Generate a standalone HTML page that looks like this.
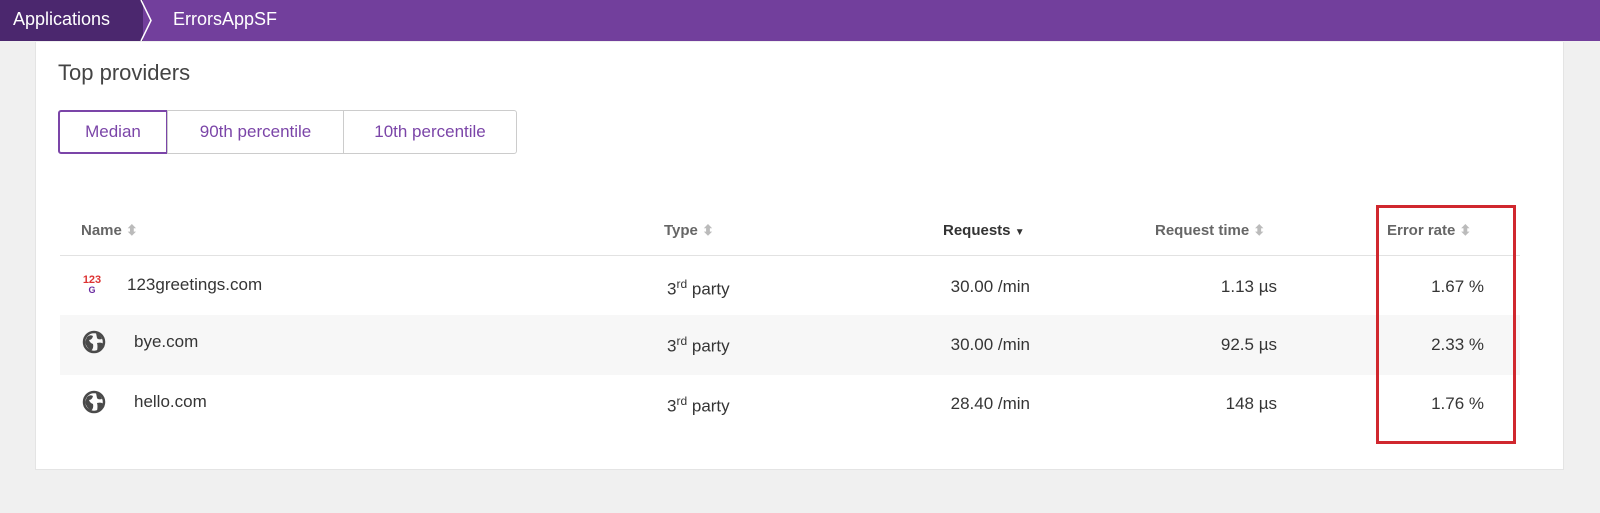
<!DOCTYPE html>
<html><head><style>
body{margin:0;width:1600px;height:513px;background:#f0f0f0;font-family:"Liberation Sans",sans-serif;position:relative;overflow:hidden}
.bar{position:absolute;left:0;top:0;width:1600px;height:41px;background:#723f9c}
.bc1{position:absolute;left:0;top:0;height:41px;width:143px;background:#4b276e}
.bar span{position:absolute;top:9px;color:#fff;font-size:18px}
.card{position:absolute;left:35px;top:42px;width:1527px;height:427px;background:#fff;border:1px solid #e4e4e4;border-top:none}
h2{position:absolute;left:58px;top:60px;margin:0;font-weight:normal;font-size:22px;color:#444}
.seg{position:absolute;top:110px;height:44px;border:1px solid #ccc;box-sizing:border-box;color:#7b45a8;font-size:17px;line-height:42px;text-align:center}
.th{position:absolute;top:222px;font-size:15px;font-weight:bold;color:#666}
.ar{color:#bbb;font-size:14px}
.c{position:absolute;font-size:17px;color:#353535}
</style></head><body>
<div class="bar"><div class="bc1"></div>
<svg style="position:absolute;left:140px;top:0" width="14" height="41"><path d="M1 0 L11 20.5 L1 41" stroke="#fff" stroke-width="1.5" fill="none"/></svg>
<span style="left:13px">Applications</span><span style="left:173px">ErrorsAppSF</span></div>
<div class="card"></div>
<h2>Top providers</h2>
<div class="seg" style="left:58px;width:110px;border:2px solid #7b45a8;border-radius:3px 0 0 3px;line-height:40px">Median</div>
<div class="seg" style="left:167px;width:177px">90th percentile</div>
<div class="seg" style="left:343px;width:174px;border-radius:0 3px 3px 0">10th percentile</div>
<div class="th" style="left:81px">Name <span class="ar">⬍</span></div>
<div class="th" style="left:664px">Type <span class="ar">⬍</span></div>
<div class="th" style="left:943px;color:#333">Requests <span style="font-size:10px">▼</span></div>
<div class="th" style="left:1155px">Request time <span class="ar">⬍</span></div>
<div class="th" style="left:1387px">Error rate <span class="ar">⬍</span></div>
<div style="position:absolute;left:60px;top:255px;width:1460px;height:1px;background:#e2e2e2"></div>
<div style="position:absolute;left:60px;top:315px;width:1460px;height:60px;background:#f7f7f7"></div>

<div style="position:absolute;left:81px;top:275px;width:22px;height:22px;font-size:11px;font-weight:bold;line-height:10px;text-align:center"><div style="color:#d33">123</div><div style="color:#6a2ca0;font-size:9px">G</div></div>
<svg style="position:absolute;left:82px;top:330px" width="24" height="24" viewBox="0 0 24 24"><circle cx="12" cy="12" r="10" fill="none" stroke="#4a4a4a" stroke-width="2.5"/><path d="M5 7 Q8 4 11 6 Q10 10 7 10 Q8 13 11 14 Q12 18 9 21 Q4 17 3 12 Z M14 3 Q19 5 20 9 Q16 10 15 8 Z M15 13 Q20 12 21 14 Q19 19 15 21 Q16 16 15 13 Z" fill="#4a4a4a"/></svg>
<svg style="position:absolute;left:82px;top:390px" width="24" height="24" viewBox="0 0 24 24"><circle cx="12" cy="12" r="10" fill="none" stroke="#4a4a4a" stroke-width="2.5"/><path d="M5 7 Q8 4 11 6 Q10 10 7 10 Q8 13 11 14 Q12 18 9 21 Q4 17 3 12 Z M14 3 Q19 5 20 9 Q16 10 15 8 Z M15 13 Q20 12 21 14 Q19 19 15 21 Q16 16 15 13 Z" fill="#4a4a4a"/></svg>

<div class="c" style="left:127px;top:275px">123greetings.com</div>
<div class="c" style="left:134px;top:332px">bye.com</div>
<div class="c" style="left:134px;top:392px">hello.com</div>
<div class="c" style="left:667px;top:277px">3<sup style="font-size:12px">rd</sup> party</div>
<div class="c" style="left:667px;top:334px">3<sup style="font-size:12px">rd</sup> party</div>
<div class="c" style="left:667px;top:394px">3<sup style="font-size:12px">rd</sup> party</div>
<div class="c" style="right:570px;top:277px">30.00 /min</div>
<div class="c" style="right:570px;top:335px">30.00 /min</div>
<div class="c" style="right:570px;top:394px">28.40 /min</div>
<div class="c" style="right:323px;top:277px">1.13 µs</div>
<div class="c" style="right:323px;top:335px">92.5 µs</div>
<div class="c" style="right:323px;top:394px">148 µs</div>
<div class="c" style="right:116px;top:277px">1.67 %</div>
<div class="c" style="right:116px;top:335px">2.33 %</div>
<div class="c" style="right:116px;top:394px">1.76 %</div>
<div style="position:absolute;left:1376px;top:205px;width:134px;height:233px;border:3px solid #d0272e"></div>
</body></html>
